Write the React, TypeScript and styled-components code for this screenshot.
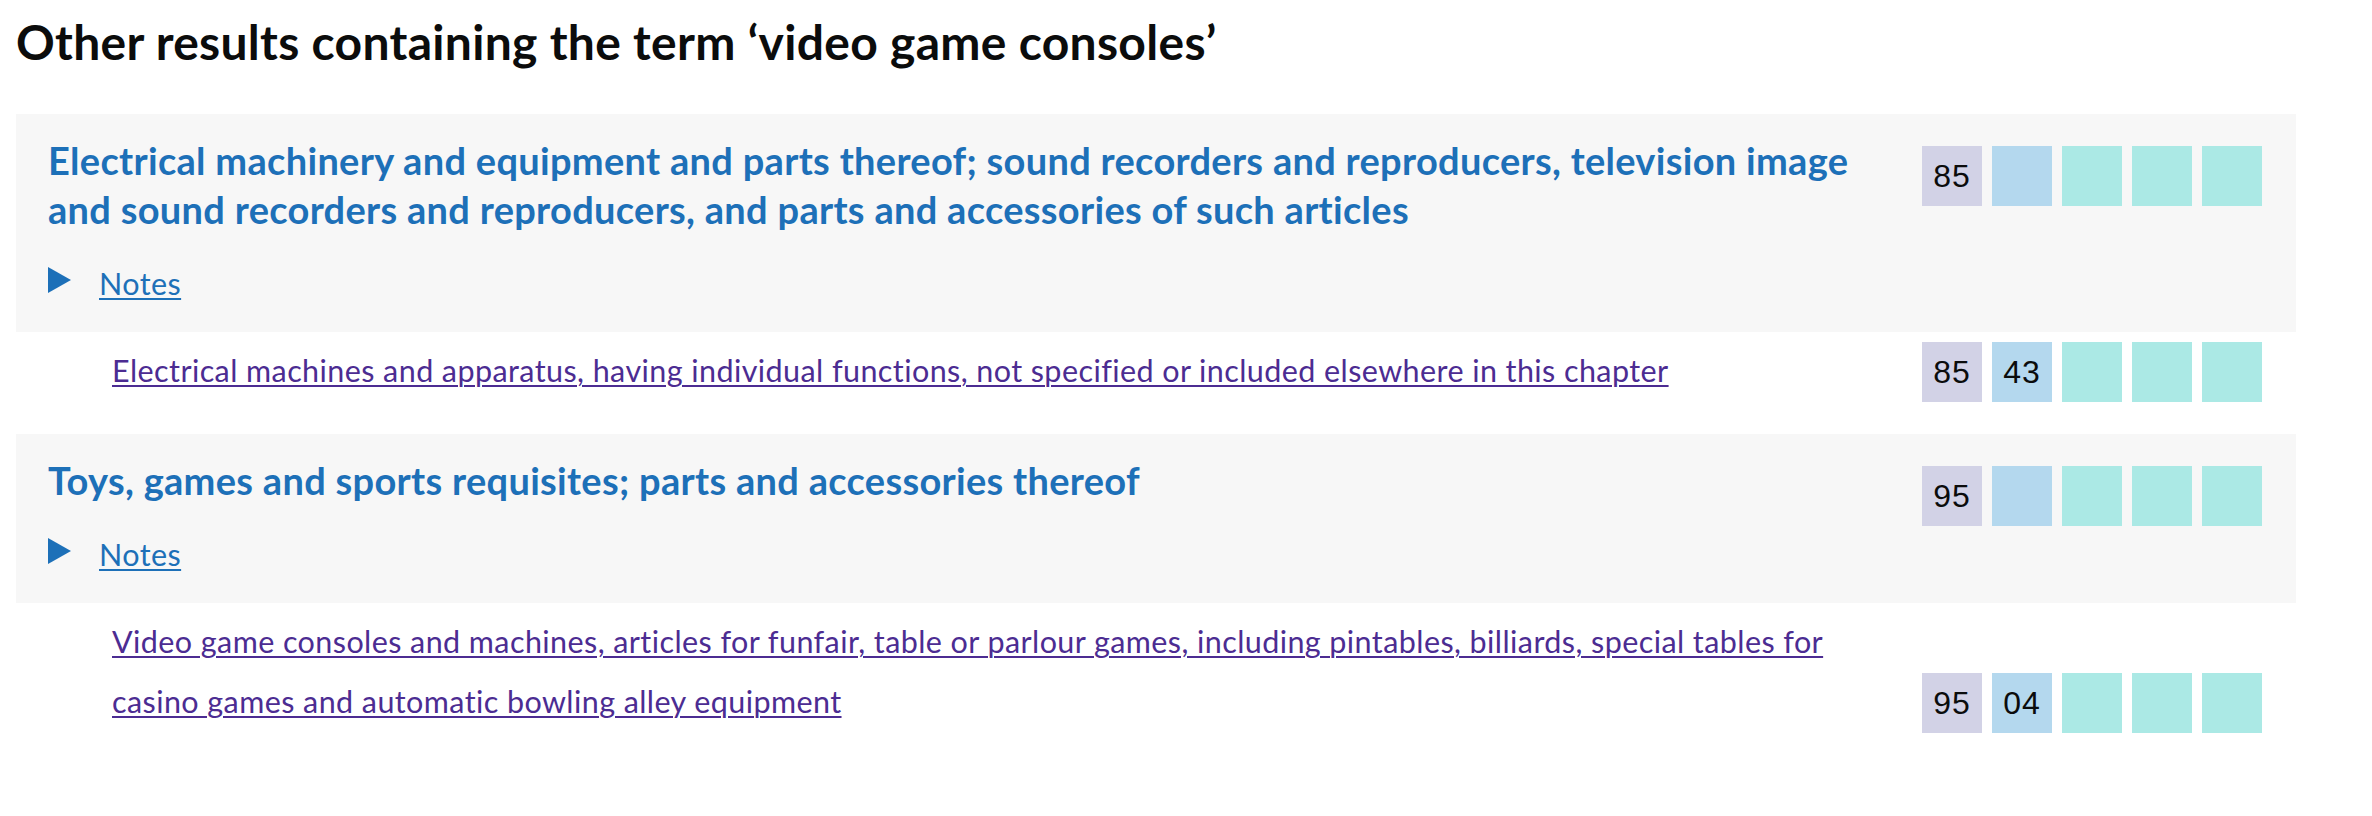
import React from "react";
import styled, { createGlobalStyle } from "styled-components";

const GlobalStyle = createGlobalStyle`
  body {
    margin: 0;
    background: #ffffff;
    font-family: Lato, "Noto Sans", sans-serif;
    color: #0b0c0c;
  }
`;

const Page = styled.main`
  padding: 13px 0 0 16px;
  width: 2280px;
`;

const Heading = styled.h2`
  margin: 0 0 43px;
  font-size: 48px;
  line-height: 58px;
  font-weight: 700;
  letter-spacing: 0.3px;
  color: #0b0c0c;
`;

const Group = styled.section``;

const Header = styled.div`
  display: flex;
  align-items: flex-start;
  background: #f7f7f7;
  padding: 22px 34px 30px 32px;
`;

const HeaderMain = styled.div`
  flex: 1;
  margin-right: 30px;
`;

const Title = styled.a`
  display: block;
  font-size: 38px;
  line-height: 49px;
  font-weight: 700;
  letter-spacing: 0.3px;
  color: #1d70b8;
  text-decoration: none;
`;

const Notes = styled.div`
  display: flex;
  align-items: flex-start;
  margin-top: 30px;
`;

const Arrow = styled.span`
  width: 0;
  height: 0;
  margin-top: 3px;
  border-style: solid;
  border-width: 13px 0 13px 23px;
  border-color: transparent transparent transparent #1d70b8;
`;

const linkText = `
  font-size: 30.5px;
  letter-spacing: 0.42px;
  text-decoration: underline;
  text-underline-offset: 3px;
  text-decoration-thickness: 2px;
`;

const NotesLink = styled.a`
  ${linkText}
  margin-left: 28px;
  line-height: 38px;
  color: #1d70b8;
`;

const Row = styled.div`
  display: flex;
  align-items: flex-end;
  padding: 8px 34px 32px 96px;
`;

const RowLink = styled.a`
  ${linkText}
  flex: 1;
  margin: 0 30px 2px 0;
  line-height: 60px;
  color: #4c2c92;
`;

const Codes = styled.div<{ $top?: number }>`
  display: flex;
  gap: 10px;
  margin-top: ${(p) => p.$top ?? 0}px;
`;

const Code = styled.span<{ $tone: string }>`
  display: flex;
  align-items: center;
  justify-content: center;
  width: 60px;
  height: 60px;
  background: ${(p) => p.$tone};
  font-family: "Liberation Sans", Arial, sans-serif;
  font-size: 32px;
  letter-spacing: 1px;
  color: #0b0c0c;
`;

const tones = ["#d2d2e6", "#b4d8ee", "#abe9e5", "#abe9e5", "#abe9e5"];

function CodeBlocks({ digits, top }: { digits: string[]; top?: number }) {
  return (
    <Codes $top={top}>
      {tones.map((tone, i) => (
        <Code key={i} $tone={tone}>
          {digits[i] ?? ""}
        </Code>
      ))}
    </Codes>
  );
}

interface Result {
  title: string;
  chapter: string;
  heading: string;
  headingCode: string;
}

const results: Result[] = [
  {
    title:
      "Electrical machinery and equipment and parts thereof; sound recorders and reproducers, television image and sound recorders and reproducers, and parts and accessories of such articles",
    chapter: "85",
    heading:
      "Electrical machines and apparatus, having individual functions, not specified or included elsewhere in this chapter",
    headingCode: "43",
  },
  {
    title: "Toys, games and sports requisites; parts and accessories thereof",
    chapter: "95",
    heading:
      "Video game consoles and machines, articles for funfair, table or parlour games, including pintables, billiards, special tables for casino games and automatic bowling alley equipment",
    headingCode: "04",
  },
];

export default function App() {
  return (
    <>
      <GlobalStyle />
      <Page>
        <Heading>Other results containing the term ‘video game consoles’</Heading>
        {results.map((r) => (
          <Group key={r.chapter}>
            <Header>
              <HeaderMain>
                <Title href="#">{r.title}</Title>
                <Notes>
                  <Arrow />
                  <NotesLink href="#">Notes</NotesLink>
                </Notes>
              </HeaderMain>
              <CodeBlocks digits={[r.chapter]} top={10} />
            </Header>
            <Row>
              <RowLink href="#">{r.heading}</RowLink>
              <CodeBlocks digits={[r.chapter, r.headingCode]} />
            </Row>
          </Group>
        ))}
      </Page>
    </>
  );
}
